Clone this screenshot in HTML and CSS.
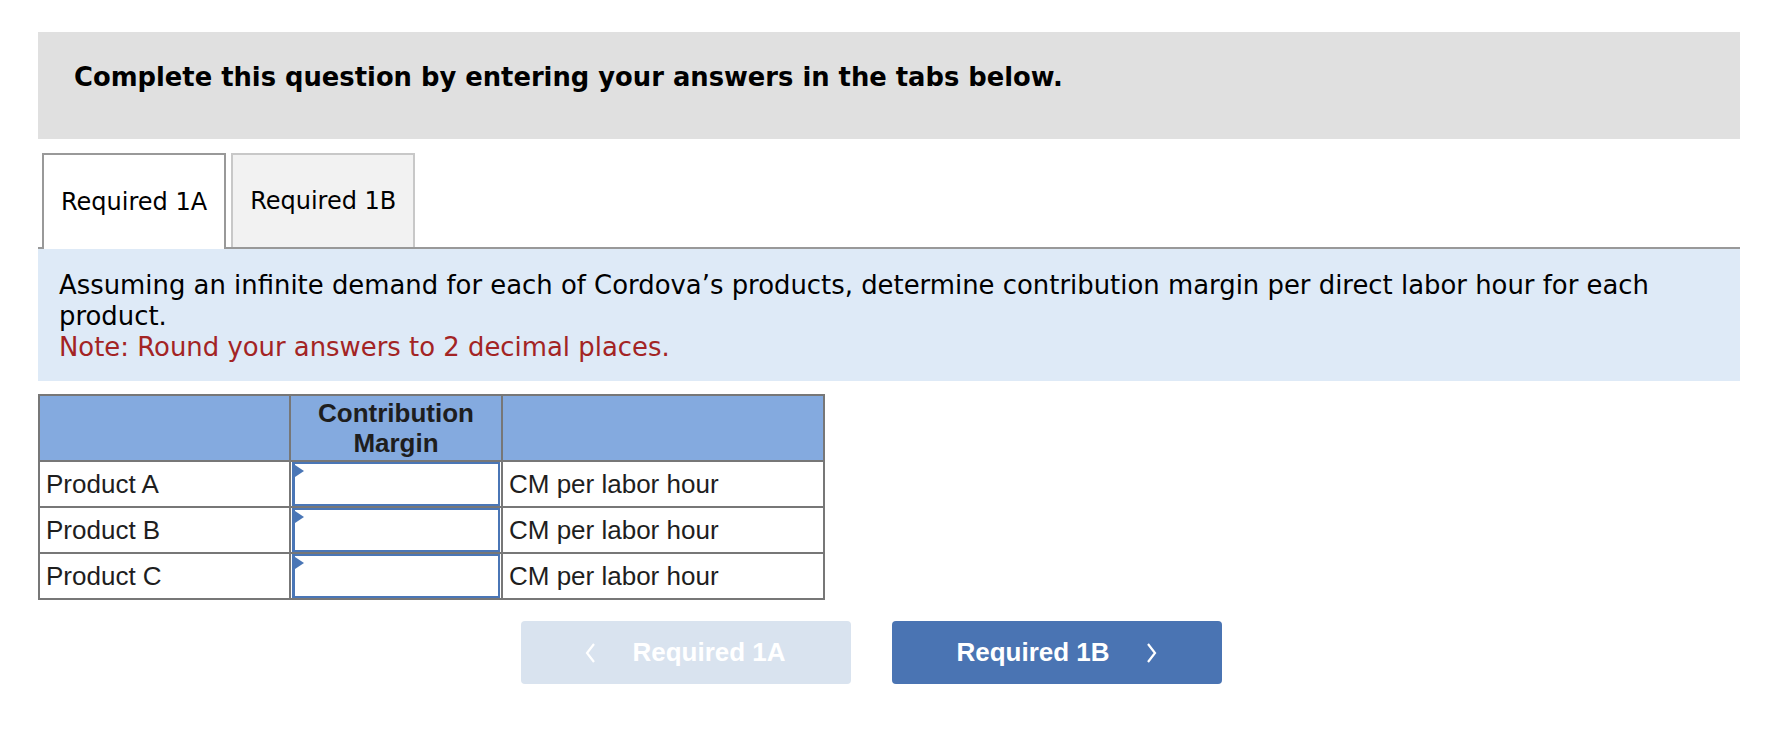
FILE: index.html
```html
<!DOCTYPE html>
<html lang="en">
<head>
  <meta charset="UTF-8">
  <meta name="viewport" content="width=device-width, initial-scale=1.0">
  <title>Required 1A</title>

  <link rel="stylesheet" href="styles.css">
</head>
<body>
  <div class="page">
    <div class="instructions">
      <h2>Complete this question by entering your answers in the tabs below.</h2>
    </div>

    <div class="tabs">
      <div class="tab active">Required 1A</div>
      <div class="tab">Required 1B</div>
    </div>

    <div class="prompt">
      <p>Assuming an infinite demand for each of Cordova’s products, determine contribution margin per direct labor hour for each product.</p>
      <p class="note">Note: Round your answers to 2 decimal places.</p>
    </div>

    <table class="answers">
      <colgroup>
        <col class="col-name">
        <col class="col-value">
        <col class="col-unit">
      </colgroup>
      <thead>
        <tr>
          <th></th>
          <th>Contribution<br>Margin</th>
          <th></th>
        </tr>
      </thead>
      <tbody>
        <tr>
          <td class="name">Product A</td>
          <td class="entry"><div class="field"><input type="text"></div></td>
          <td class="unit">CM per labor hour</td>
        </tr>
        <tr>
          <td class="name">Product B</td>
          <td class="entry"><div class="field"><input type="text"></div></td>
          <td class="unit">CM per labor hour</td>
        </tr>
        <tr>
          <td class="name">Product C</td>
          <td class="entry"><div class="field"><input type="text"></div></td>
          <td class="unit">CM per labor hour</td>
        </tr>
      </tbody>
    </table>

    <div class="nav">
      <button class="nav-btn prev" disabled>
        <svg width="11" height="20" viewBox="0 0 11 20"><polyline points="9,1 2,10 9,19" fill="none" stroke="#fff" stroke-width="2.2"/></svg>
        <span>Required 1A</span>
      </button>
      <button class="nav-btn next">
        <span>Required 1B</span>
        <svg width="11" height="20" viewBox="0 0 11 20"><polyline points="2,1 9,10 2,19" fill="none" stroke="#fff" stroke-width="2.2"/></svg>
      </button>
    </div>
  </div>
</body>
</html>
```

FILE: styles.css
```css
body {
    margin: 0;
    font-family: "DejaVu Sans", Verdana, sans-serif;
    color: #000;
    background: #fff;
}
.page {
    width: 1702px;
    margin: 32px 0 0 38px;
}
.instructions {
    background-color: #e0e0e0;
    height: 107px;
    box-sizing: border-box;
    padding: 30px 36px 0;
}
.instructions h2 {
    margin: 0;
    font-size: 25.8px;
    line-height: 31px;
    font-weight: bold;
}

/* tabs */
.tabs {
    display: flex;
    align-items: flex-start;
    gap: 5px;
    margin-top: 14px;
    padding-left: 4px;
    border-bottom: 2px solid #999;
}
.tab {
    height: 94px;
    box-sizing: border-box;
    padding: 0 17px;
    display: flex;
    align-items: center;
    font-size: 24px;
    background: #f2f2f2;
    border: 2px solid #c8c8c8;
    border-bottom: none;
    cursor: pointer;
}
.tab.active {
    height: 96px;
    margin-bottom: -2px;
    background: #fff;
    border-color: #999;
}

/* question text */
.prompt {
    background-color: #deeaf7;
    padding: 21px 21px 18px;
    font-size: 25.9px;
    line-height: 31px;
}
.prompt p {
    margin: 0;
}
.prompt .note {
    color: #a32424;
}

/* answer table */
.answers {
    width: 785px;
    table-layout: fixed;
    margin-top: 13px;
    border-collapse: collapse;
    font-family: "Liberation Sans", Arial, Helvetica, sans-serif;
    font-size: 26px;
    color: #1e1e1e;
}
.col-name {
    width: 251px;
}
.col-value {
    width: 212px;
}
.col-unit {
    width: 322px;
}
.answers th,
.answers td {
    border: 2px solid #777;
}
.answers th {
    background-color: #84aadf;
    height: 64px;
    padding: 0 4px;
    font-size: 26px;
    line-height: 30px;
    font-weight: bold;
    text-align: center;
}
.answers td {
    height: 44px;
    padding: 0 6px;
}
.answers td.entry {
    padding: 0;
}
.field {
    position: relative;
    margin: 0 1px;
}
.field::before {
    content: "";
    position: absolute;
    left: 3px;
    top: 3px;
    border-style: solid;
    border-width: 6px 0 6px 9px;
    border-color: transparent transparent transparent #4a76b6;
}
.field input {
    display: block;
    width: 100%;
    height: 44px;
    box-sizing: border-box;
    border: 2px solid #4a76b6;
    border-left-width: 3px;
    outline: none;
    font-size: 24px;
}

/* bottom navigation */
.nav {
    display: flex;
    justify-content: center;
    gap: 41px;
    margin-top: 21px;
    padding-right: 36px;
}
.nav-btn {
    width: 330px;
    height: 63px;
    border: none;
    border-radius: 4px;
    display: flex;
    align-items: center;
    justify-content: center;
    gap: 36px;
    font-family: "Liberation Sans", Arial, Helvetica, sans-serif;
    font-size: 26px;
    font-weight: bold;
    color: #fff;
    cursor: pointer;
}
.nav-btn.prev {
    background-color: #d9e3ef;
    cursor: default;
}
.nav-btn.next {
    background-color: #4a74b3;
}
```
